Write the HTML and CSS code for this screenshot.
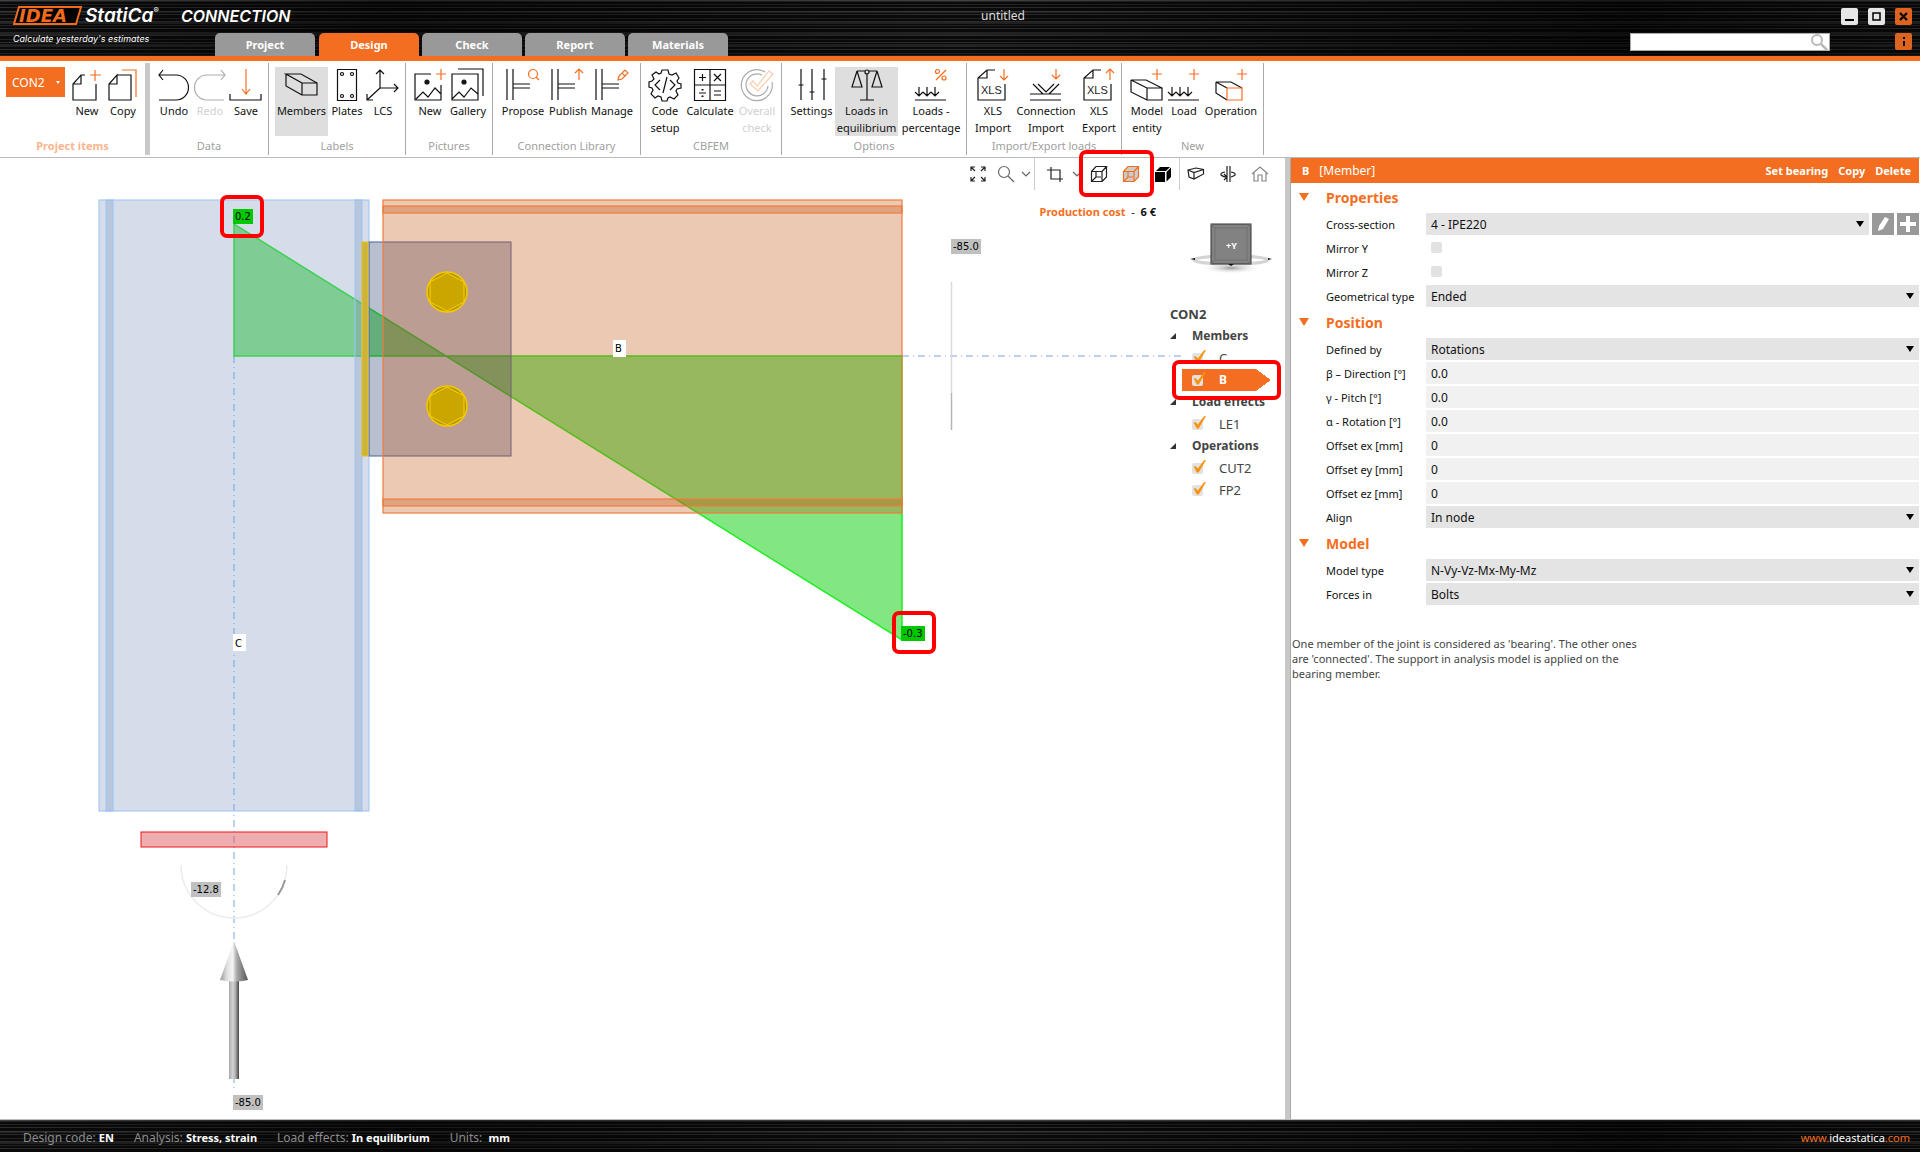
FILE: index.html
```html
<!DOCTYPE html>
<html lang="en">
<head>
<meta charset="UTF-8">
<meta name="viewport" content="width=device-width, initial-scale=1.0">
<title>IDEA StatiCa Connection - untitled</title>
<link rel="stylesheet" href="styles.css">
</head>
<body>
<div class="app">

    <header class="header">
        <div class="brand">
            <div class="logo">
                <svg class="logo-mark" width="70" height="20" viewBox="0 0 70 20">
                    <path d="M6 1H68L63 18H1Z" fill="#000" stroke="#f26b1d" stroke-width="2"/>
                    <text x="6" y="16" class="logo-text">IDEA</text>
                </svg>
                <span class="logo-name">StatiCa<sup>®</sup></span>
                <span class="logo-module">CONNECTION</span>
            </div>
            <div class="tagline">Calculate yesterday's estimates</div>
        </div>
        <div class="title">untitled</div>
        <div class="window-buttons">
            <button type="button" class="win-btn" aria-label="Minimize"><svg width="17" height="17"><path d="M4 12H13" stroke="#000" stroke-width="2"/></svg></button>
            <button type="button" class="win-btn" aria-label="Maximize"><svg width="17" height="17"><path d="M5 5H12V12H5Z" fill="none" stroke="#000" stroke-width="1.5"/></svg></button>
            <button type="button" class="win-btn orange" aria-label="Close"><svg width="17" height="17"><path d="M5 5L12 12M12 5L5 12" stroke="#000" stroke-width="2.2"/></svg></button>
        </div>
        <div class="header-bottom">
            <nav class="tabs">
                <button type="button" class="tab">Project</button>
                <button type="button" class="tab active">Design</button>
                <button type="button" class="tab">Check</button>
                <button type="button" class="tab">Report</button>
                <button type="button" class="tab">Materials</button>
            </nav>
            <div class="search">
                <input type="text" aria-label="Search">
                <svg width="18" height="18" fill="none" stroke="#b9b9b9" stroke-width="2"><circle cx="6" cy="7" r="5"/><path d="M10 11L16 17" stroke-width="2.5"/></svg>
            </div>
            <button type="button" class="win-btn orange" aria-label="Info"><svg width="17" height="17"><path d="M9 4V6M9 8V13" stroke="#000" stroke-width="2"/></svg></button>
        </div>
    </header>

    <section class="ribbon">
        <div class="group group-items">
            <div class="tools">
                <button type="button" class="item-select">CON2 <i class="caret"></i></button>
                <button type="button" class="tool">
                    <svg class="icon" viewBox="0 0 32 32"><path d="M14 6H10L2 15V31H25V15M2 15H10V6"/><path class="or" d="M24 1V12M19 6H30"/></svg>
                    <span>New</span>
                </button>
                <button type="button" class="tool">
                    <svg class="icon" viewBox="0 0 32 32"><path d="M10 6H24V31H2V15L10 6V15H2"/><path class="or" d="M15 1H29V28"/></svg>
                    <span>Copy</span>
                </button>
            </div>
            <div class="group-label">Project items</div>
        </div>
        <div class="group group-data">
            <div class="tools">
                <button type="button" class="tool">
                    <svg class="icon" viewBox="0 0 32 32"><path d="M1 6H18A12.5 12.5 0 0 1 18 31H1M5 1L1 6L5 11"/></svg>
                    <span>Undo</span>
                </button>
                <button type="button" class="tool" disabled>
                    <svg class="icon" viewBox="0 0 32 32"><path d="M31 6H13A12.5 12.5 0 0 0 13 31H30M27 1L31 6L27 11"/></svg>
                    <span>Redo</span>
                </button>
                <button type="button" class="tool">
                    <svg class="icon" viewBox="0 0 32 32"><path d="M0 25V31H31V25"/><path class="or" d="M16 0V25M12 20L16 25L20 20"/></svg>
                    <span>Save</span>
                </button>
            </div>
            <div class="group-label">Data</div>
        </div>
        <div class="group group-labels">
            <div class="tools">
                <button type="button" class="tool selected">
                    <svg class="icon" viewBox="0 0 32 32"><path d="M16 14H31V26H16ZM16 14L0 5H15L31 14M0 5V17L16 26"/></svg>
                    <span>Members</span>
                </button>
                <button type="button" class="tool">
                    <svg class="icon" viewBox="0 0 32 32"><path d="M6.5 .5H25.5V31.5H6.5Z"/><circle cx="11" cy="5" r="1.5"/><circle cx="21" cy="5" r="1.5"/><circle cx="11" cy="27" r="1.5"/><circle cx="21" cy="27" r="1.5"/></svg>
                    <span>Plates</span>
                </button>
                <button type="button" class="tool">
                    <svg class="icon" viewBox="0 0 32 32"><path d="M13 1V19H31M13 19L0 31M9 5L13 1L17 5M27 15L31 19L27 23M0 25V31H6"/></svg>
                    <span>LCS</span>
                </button>
            </div>
            <div class="group-label">Labels</div>
        </div>
        <div class="group group-pictures">
            <div class="tools">
                <button type="button" class="tool">
                    <svg class="icon" viewBox="0 0 32 32"><path d="M17 5H1V31H27V16M2 30L9 23L14 28L21 19L27 25"/><circle cx="13" cy="13" r="2" fill="#111"/><path class="or" d="M27 0V11M22 5H32"/></svg>
                    <span>New</span>
                </button>
                <button type="button" class="tool">
                    <svg class="icon" viewBox="0 0 32 32"><path d="M0 5H26V31H0ZM6 0H31V27M0 30L7 23L12 28L19 19L26 25"/><circle cx="12" cy="13" r="2" fill="#111"/></svg>
                    <span>Gallery</span>
                </button>
            </div>
            <div class="group-label">Pictures</div>
        </div>
        <div class="group group-library">
            <div class="tools">
                <button type="button" class="tool">
                    <svg class="icon" viewBox="0 0 32 32"><path d="M0 0V31M6 0V31M6 15H23M6 19H23"/><g class="or"><circle cx="26" cy="5" r="4.5"/><path d="M29 8L32 11"/></g></svg>
                    <span>Propose</span>
                </button>
                <button type="button" class="tool">
                    <svg class="icon" viewBox="0 0 32 32"><path d="M0 0V31M6 0V31M6 15H23M6 19H23"/><path class="or" d="M27 11V0M23 4L27 0L31 4"/></svg>
                    <span>Publish</span>
                </button>
                <button type="button" class="tool">
                    <svg class="icon" viewBox="0 0 32 32"><path d="M0 0V31M6 0V31M6 15H23M6 19H23"/><path class="or" d="M22 11L23 7L29 1L32 4L26 10ZM26 4L29 7"/></svg>
                    <span>Manage</span>
                </button>
            </div>
            <div class="group-label">Connection Library</div>
        </div>
        <div class="group group-cbfem">
            <div class="tools">
                <button type="button" class="tool">
                    <svg class="icon" viewBox="0 0 32 32"><path d="M13 1H19L20 5L23 6L27 4L30 9L28 12L29 14L32 15V19L28 20L27 22L29 26L25 30L21 28L19 29L18 32H13L12 28L9 27L6 29L2 25L4 21L3 19L0 18V13L3 12L5 10L3 6L7 3L10 5L12 4Z"/><path d="M11 11L6 16L11 21M21 11L26 16L21 21M18 8L14 24"/></svg>
                    <span>Code<br>setup</span>
                </button>
                <button type="button" class="tool">
                    <svg class="icon" viewBox="0 0 32 32"><path d="M.5 .5H31.5V31.5H.5ZM16 0V32M0 16H32M5 8.5H12M8.5 5V12M20 5L27 12M27 5L20 12M5 24H12M20 22H27M20 26H27"/><path d="M8.5 20V21.5M8.5 26.5V28" stroke-width="2"/></svg>
                    <span>Calculate</span>
                </button>
                <button type="button" class="tool" disabled>
                    <svg class="icon" viewBox="0 0 32 32"><path d="M24 3A15.5 15.5 0 1 0 31 13M21 6A11 11 0 1 0 27 17"/><path class="or" d="M9 15L12 12L16 17L28 2L32 5L17 22Z"/></svg>
                    <span>Overall<br>check</span>
                </button>
            </div>
            <div class="group-label">CBFEM</div>
        </div>
        <div class="group group-options">
            <div class="tools">
                <button type="button" class="tool">
                    <svg class="icon" viewBox="0 0 32 32"><path d="M5 0V31M16 0V31M28 0V31M2.5 16H7.5M13.5 23H18.5M25.5 10H30.5"/></svg>
                    <span>Settings</span>
                </button>
                <button type="button" class="tool selected">
                    <svg class="icon" viewBox="0 0 32 32"><path d="M9 31H23M16 5V31M14 2H6M18 2H26M6 2L1 18H11L6 2M26 2L21 18H31L26 2"/><circle cx="16" cy="3" r="2"/></svg>
                    <span>Loads in<br>equilibrium</span>
                </button>
                <button type="button" class="tool">
                    <svg class="icon" viewBox="0 0 32 32"><path d="M0 31H31M4 18V27M0 23L4 27L8 23M12 18V27M8 23L12 27L16 23M20 18V27M16 23L20 27L24 23"/><g class="or"><path d="M31 1L21 11"/><circle cx="22.5" cy="2.5" r="2"/><circle cx="29" cy="9" r="2"/></g></svg>
                    <span>Loads -<br>percentage</span>
                </button>
            </div>
            <div class="group-label">Options</div>
        </div>
        <div class="group group-import">
            <div class="tools">
                <button type="button" class="tool">
                    <svg class="icon" viewBox="0 0 32 32"><path d="M18 1H10L1 9V31H28V15M1 9H10V1"/><text x="4" y="25">XLS</text><path class="or" d="M27 0V11M23 7L27 11L31 7"/></svg>
                    <span>XLS<br>Import</span>
                </button>
                <button type="button" class="tool">
                    <svg class="icon" viewBox="0 0 32 32"><path d="M0 31H31M0 25H31M3 15L13 25M8 15L16 23L24 15M29 15L19 25"/><path class="or" d="M26 0V10M22 6L26 10L30 6"/></svg>
                    <span>Connection<br>Import</span>
                </button>
                <button type="button" class="tool">
                    <svg class="icon" viewBox="0 0 32 32"><path d="M18 1H10L1 9V31H28V15M1 9H10V1"/><text x="4" y="25">XLS</text><path class="or" d="M27 11V0M23 4L27 0L31 4"/></svg>
                    <span>XLS<br>Export</span>
                </button>
            </div>
            <div class="group-label">Import/Export loads</div>
        </div>
        <div class="group group-new">
            <div class="tools">
                <button type="button" class="tool">
                    <svg class="icon" viewBox="0 0 32 32"><path d="M16 19H31V31H16ZM16 19L0 11H15L31 19M0 11V23L16 31"/><path class="or" d="M26 0V11M21 5H31"/></svg>
                    <span>Model<br>entity</span>
                </button>
                <button type="button" class="tool">
                    <svg class="icon" viewBox="0 0 32 32"><path d="M0 31H31M4 18V27M0 23L4 27L8 23M12 18V27M8 23L12 27L16 23M20 18V27M16 23L20 27L24 23"/><path class="or" d="M26 0V11M21 5H31"/></svg>
                    <span>Load</span>
                </button>
                <button type="button" class="tool">
                    <svg class="icon" viewBox="0 0 32 32"><path d="M12 19L1 13H16L27 19M1 13V24L12 31"/><path class="or" d="M12 19H27V31H12ZM27 0V11M22 5H32"/></svg>
                    <span>Operation</span>
                </button>
            </div>
            <div class="group-label">New</div>
        </div>
    </section>

    <main class="workspace">
        <div class="viewport">
            <!-- 3D scene, front view -->
            <svg class="scene" viewBox="0 158 1285 961" preserveAspectRatio="xMinYMin meet">
                <defs>
                    <linearGradient id="metal"><stop offset="0" stop-color="#aaa"/><stop offset=".35" stop-color="#d0d0d0"/><stop offset=".6" stop-color="#bbb"/><stop offset="1" stop-color="#444"/></linearGradient>
                    <linearGradient id="cone"><stop offset="0" stop-color="#999"/><stop offset=".25" stop-color="#e0e0e0"/><stop offset=".45" stop-color="#f4f4f4"/><stop offset=".6" stop-color="#aaa"/><stop offset="1" stop-color="#555"/></linearGradient>
                    <g id="bolt">
                        <circle r="20" fill="#b39a00" stroke="#f5c800" stroke-width="1.5"/>
                        <path d="M0 -19L17 -10V10L0 19L-17 10V-10Z" fill="#c9a600" stroke="#ffd000"/>
                    </g>
                </defs>

                <path class="axis" d="M234 356V1092"/>
                <path class="axis" d="M902 356H1182"/>

                <!-- bending moment -->
                <path class="moment" d="M234 224V356H902V640Z"/>

                <!-- column C -->
                <rect class="column" x="99" y="200" width="270" height="611"/>
                <rect class="column" x="106" y="200" width="7" height="611"/>
                <rect class="column" x="355" y="200" width="7" height="611"/>

                <!-- fin plate and weld -->
                <rect class="plate" x="369" y="242" width="142" height="214"/>
                <rect class="weld" x="362" y="242" width="6" height="214"/>

                <!-- beam B -->
                <rect class="beam" x="383" y="200" width="519" height="313"/>
                <rect class="beam" x="383" y="206" width="519" height="7"/>
                <rect class="beam" x="383" y="499" width="519" height="7"/>

                <use href="#bolt" x="447" y="292"/>
                <use href="#bolt" x="447" y="406"/>

                <rect class="support" x="141" y="832" width="186" height="15"/>
                <path d="M181 865A53 53 0 0 0 287 865" fill="none" stroke="#ececec" stroke-width="1.5"/>
                <path d="M285 880Q283 888 278 895" fill="none" stroke="#999" stroke-width="2"/>
                <path d="M951.5 282V393" stroke="#dadada" stroke-width="1.5"/>
                <path d="M951.5 393V430" stroke="#b5b5b5" stroke-width="1.5"/>

                <rect x="229" y="980" width="10" height="99" fill="url(#metal)"/>
                <path d="M234 941L248 980Q234 983 220 980Z" fill="url(#cone)"/>

                <g class="tags">
                    <rect x="613" y="340" width="13" height="17" fill="#fff"/><text x="615" y="352">B</text>
                    <rect x="233" y="634" width="13" height="17" fill="#fff"/><text x="235" y="647">C</text>
                    <rect x="951" y="239" width="30" height="15" fill="#c0c0c0"/><text x="953" y="250">-85.0</text>
                    <rect x="191" y="882" width="30" height="15" fill="#c0c0c0"/><text x="193" y="893">-12.8</text>
                    <rect x="233" y="1095" width="30" height="15" fill="#c0c0c0"/><text x="235" y="1106">-85.0</text>
                    <rect x="233" y="209" width="20" height="15" fill="#00c800"/><text x="235" y="220">0.2</text>
                    <rect x="901" y="626" width="24" height="15" fill="#00c800"/><text x="903" y="637">-0.3</text>
                </g>
                <rect class="mark" x="222" y="197" width="40" height="39" rx="5"/>
                <rect class="mark" x="894" y="613" width="40" height="39" rx="5"/>
            </svg>

            <div class="overlay">
                <div class="view-bar">
                    <button type="button" class="view-btn" aria-label="Zoom all"><svg class="vi" viewBox="0 0 16 16"><path d="M1 5V1H5M1 1L5 5M11 1H15V5M15 1L11 5M1 11V15H5M1 15L5 11M11 15H15V11M15 15L11 11"/></svg></button>
                    <button type="button" class="view-btn zoom" aria-label="Zoom"><svg class="vi" viewBox="0 0 16 16"><circle cx="6" cy="6" r="5.5"/><path d="M10 10L16 16"/></svg></button>
                    <button type="button" class="view-btn more" aria-label="Zoom options"><svg width="8" height="6" class="vi-sm" viewBox="0 0 8 6"><path d="M0 1L4 5L8 1"/></svg></button>
                    <span class="view-sep"></span>
                    <button type="button" class="view-btn crop" aria-label="Crop"><svg class="vi" viewBox="0 0 16 16"><path d="M4 1V13H16M0 4H13V16"/></svg></button>
                    <button type="button" class="view-btn more-sm" aria-label="Crop options"><svg width="8" height="6" class="vi-sm" viewBox="0 0 8 6"><path d="M0 1L4 5L8 1"/></svg></button>
                    <div class="marked">
                        <button type="button" class="view-btn" aria-label="Wireframe"><svg class="vi" viewBox="0 0 16 16"><path d="M.5 5.5H11V15.5H.5ZM.5 5.5L5 .5H15.5L11 5.5M15.5 .5V11L11 15.5M5 6V11H10M5 11L1 15"/></svg></button>
                        <button type="button" class="view-btn transparent" aria-label="Transparent"><svg class="vi" viewBox="0 0 16 16"><path d="M.5 5.5L5 .5H15.5V11L11 15.5H.5Z" fill="#ccc"/><path d="M.5 5.5H11V15.5M15.5 .5L11 5.5M5 6V11H10M5 11L1 15"/></svg></button>
                    </div>
                    <button type="button" class="view-btn" aria-label="Solid"><svg class="vi" viewBox="0 0 16 16"><path d="M0 6H10V16H0ZM1 5L5 1H15L11 5ZM11.5 6L16 1.5V11L11.5 15.5Z" fill="#000" stroke="none"/></svg></button>
                    <span class="view-sep"></span>
                    <button type="button" class="view-btn" aria-label="Member view"><svg class="vi" viewBox="0 0 16 16"><path d="M0 4L8 2L15.5 3.5V8L6 13L1 11ZM0 4L6 6.5L15.5 3.5M6 6.5V13"/></svg></button>
                    <button type="button" class="view-btn" aria-label="Rotate view"><svg class="vi" viewBox="0 0 16 16"><path d="M7 0V16M10 0V16M5 6Q0 7 1 9Q3 11 7 11M4 8L7 11L4 14M11 6Q16 7 15 9Q14 10 11 11"/></svg></button>
                    <button type="button" class="view-btn home" aria-label="Home"><svg class="vi" viewBox="0 0 16 16"><path d="M0 8L8 1L16 8M2 7V15H6V9H10V15H14V7"/></svg></button>
                </div>
                <div class="cost"><b>Production cost</b>&nbsp; - &nbsp;<strong>6 €</strong></div>
                <svg class="view-cube" width="84" height="52" viewBox="0 0 84 52">
                    <defs><radialGradient id="shade"><stop offset="0" stop-color="#999"/><stop offset="1" stop-color="#fff" stop-opacity="0"/></radialGradient></defs>
                    <ellipse cx="41" cy="45" rx="30" ry="6" fill="url(#shade)"/>
                    <ellipse cx="41" cy="37" rx="37" ry="4" fill="none" stroke="#d4d4d4" stroke-width="3"/>
                    <path d="M0 36L5 35V37ZM82 36L78 35V37Z" fill="#111"/>
                    <rect x="21" y="1" width="40" height="40" fill="#828282" stroke="#333"/>
                    <path d="M25 5H57V37H25ZM21 1L25 5M61 1L57 5M21 41L25 37M61 41L57 37" fill="none" stroke="#707070"/>
                    <path d="M38 41H44L41 43Z" fill="#111"/>
                    <text x="36" y="26">+Y</text>
                </svg>
                <div class="tree">
                    <div class="tree-root">CON2</div>
                    <div class="tree-group">Members</div>
                    <label class="tree-item"><input type="checkbox" checked>C</label>
                    <label class="tree-item current"><input type="checkbox" checked>B</label>
                    <div class="tree-group">Load effects</div>
                    <label class="tree-item"><input type="checkbox" checked>LE1</label>
                    <div class="tree-group">Operations</div>
                    <label class="tree-item"><input type="checkbox" checked>CUT2</label>
                    <label class="tree-item"><input type="checkbox" checked>FP2</label>
                </div>
            </div>
        </div>

        <div class="splitter"></div>

        <aside class="panel">
            <div class="panel-head">
                <b>B</b>
                <span class="panel-type">[Member]</span>
                <button type="button">Set bearing</button>
                <button type="button">Copy</button>
                <button type="button">Delete</button>
            </div>

            <h2>Properties</h2>
            <div class="row">
                <label for="section">Cross-section</label>
                <select id="section"><option>4 - IPE220</option></select>
                <button type="button" class="row-btn" aria-label="Edit"><svg width="22" height="22"><path d="M6 18L7 13L13 4L17 6L11 16Z" fill="#fff"/></svg></button>
                <button type="button" class="row-btn" aria-label="Add"><svg width="22" height="22"><path d="M11 3V19M3 11H19" stroke="#fff" stroke-width="4"/></svg></button>
            </div>
            <div class="row"><label for="mirror-y">Mirror Y</label><input type="checkbox" id="mirror-y"></div>
            <div class="row"><label for="mirror-z">Mirror Z</label><input type="checkbox" id="mirror-z"></div>
            <div class="row"><label for="geom">Geometrical type</label><select id="geom"><option>Ended</option></select></div>

            <h2>Position</h2>
            <div class="row"><label for="defined">Defined by</label><select id="defined"><option>Rotations</option></select></div>
            <div class="row"><label for="beta">β – Direction [°]</label><input type="text" id="beta" value="0.0"></div>
            <div class="row"><label for="gamma">γ - Pitch [°]</label><input type="text" id="gamma" value="0.0"></div>
            <div class="row"><label for="alpha">α - Rotation [°]</label><input type="text" id="alpha" value="0.0"></div>
            <div class="row"><label for="ex">Offset ex [mm]</label><input type="text" id="ex" value="0"></div>
            <div class="row"><label for="ey">Offset ey [mm]</label><input type="text" id="ey" value="0"></div>
            <div class="row"><label for="ez">Offset ez [mm]</label><input type="text" id="ez" value="0"></div>
            <div class="row"><label for="align">Align</label><select id="align"><option>In node</option></select></div>

            <h2>Model</h2>
            <div class="row"><label for="model">Model type</label><select id="model"><option>N-Vy-Vz-Mx-My-Mz</option></select></div>
            <div class="row"><label for="forces">Forces in</label><select id="forces"><option>Bolts</option></select></div>

            <p class="note">One member of the joint is considered as 'bearing'. The other ones are 'connected'. The support in analysis model is applied on the bearing member.</p>
        </aside>
    </main>

    <footer class="footer">
        <span>Design code: <b>EN</b></span>
        <span>Analysis: <b>Stress, strain</b></span>
        <span>Load effects: <b>In equilibrium</b></span>
        <span>Units: &nbsp;<b>mm</b></span>
        <a href="#">www.<em>ideastatica</em>.com</a>
    </footer>

</div>
</body>
</html>
```

FILE: styles.css
```css
* {
    box-sizing: border-box;
}
body {
    margin: 0;
    font-family: "Noto Sans", "Open Sans", sans-serif;
    font-size: 11px;
    color: #111;
    background-color: #fff;
}
button, input, select {
    font-family: inherit;
    font-size: inherit;
    color: inherit;
    margin: 0;
    padding: 0;
    border: none;
    background: none;
}
svg {
    display: block;
}
.app {
    display: flex;
    flex-direction: column;
    min-height: 100vh;
}

/* header */
.header, .footer {
    background-color: #0a0a0a;
    background-image:
        linear-gradient(90deg, rgba(0,0,0,0) 0%, rgba(0,0,0,0.5) 20%, rgba(0,0,0,0) 50%, rgba(0,0,0,0.6) 85%, rgba(0,0,0,0.2) 100%),
        repeating-linear-gradient(rgba(255,255,255,0.14) 0 1px, transparent 1px 4px, rgba(255,255,255,0.1) 4px 5px, transparent 5px 7px),
        repeating-linear-gradient(rgba(255,255,255,0.1) 0 2px, transparent 2px 11px);
}
.header {
    display: grid;
    grid-template-columns: 215px 1fr 129px;
    grid-template-rows: 33px 23px;
    border-bottom: 5px solid #f36e21;
    color: #fff;
}
.brand {
    grid-row: 1 / 3;
    padding: 6px 0 0 13px;
    font-style: italic;
    white-space: nowrap;
}
.logo {
    display: flex;
    align-items: center;
    height: 20px;
}
.logo-mark {
    flex: none;
}
.logo-text {
    font: italic bold 18px "DejaVu Sans", sans-serif;
    fill: #f26b1d;
}
.logo-name {
    flex: none;
    width: 98px;
    padding-left: 2px;
    font-family: Inter, sans-serif;
    font-size: 19px;
    font-weight: 600;
    line-height: 20px;
}
.logo-name sup {
    font-size: 8px;
    line-height: 8px;
    vertical-align: top;
}
.logo-module {
    font-family: Inter, sans-serif;
    font-size: 16px;
    font-weight: 600;
}
.tagline {
    margin-top: 7px;
    font-family: Inter, sans-serif;
    font-size: 9px;
    line-height: 12px;
}
.title {
    padding-top: 7px;
    text-align: center;
    font-size: 12px;
    line-height: 18px;
    color: #ddd;
}
.window-buttons {
    display: flex;
    justify-content: flex-end;
    gap: 10px;
    padding: 8px 8px 0 0;
}
.win-btn {
    width: 17px;
    height: 17px;
    border-radius: 2px;
    background-color: #e6e6e6;
    cursor: pointer;
}
.win-btn.orange {
    background-color: #dc6420;
}
.header-bottom {
    grid-column: 2 / 4;
    display: flex;
    padding-right: 8px;
}
.tabs {
    display: flex;
    gap: 3px;
    margin-right: auto;
}
.tab {
    width: 100px;
    border-radius: 5px 5px 0 0;
    background-color: #999;
    color: #fff;
    font-weight: bold;
    cursor: pointer;
}
.tab.active {
    margin-left: 1px;
    background-color: #f36e21;
}
.search {
    display: flex;
    align-items: center;
    width: 200px;
    height: 18px;
    margin-right: 65px;
    border: 1px solid #aaa;
    background-color: #fff;
}
.search input {
    flex: 1;
    min-width: 0;
    color: #111;
}

/* ribbon */
.ribbon {
    display: flex;
    height: 97px;
    padding: 2px 0;
    border-bottom: 1px solid #bbb;
}
.group {
    display: flex;
    flex-direction: column;
    justify-content: space-between;
    border-right: 1px solid #aaa;
}
.tools {
    display: grid;
    padding: 4px 0 0 6px;
}
.group-label {
    line-height: 18px;
    text-align: center;
    color: #a0a0a0;
}
.group-items {
    width: 150px;
    border-right: 5px solid #c8c8c8;
}
.group-items .tools {
    grid-template-columns: 63px 36px 36px;
}
.group-items .group-label {
    color: #f9b58e;
    font-weight: bold;
}
.group-data {
    width: 119px;
}
.group-data .tools {
    grid-template-columns: 36px 36px 36px;
}
.group-labels {
    width: 137px;
}
.group-labels .tools {
    grid-template-columns: 53px 38px 34px;
}
.group-pictures {
    width: 87px;
}
.group-pictures .tools {
    grid-template-columns: 36px 40px;
}
.group-library {
    width: 148px;
}
.group-library .tools {
    grid-template-columns: 48px 42px 46px;
}
.group-cbfem {
    width: 141px;
}
.group-cbfem .tools {
    grid-template-columns: 36px 54px 40px;
}
.group-options {
    width: 185px;
}
.group-options .tools {
    grid-template-columns: 47px 63px 66px;
}
.group-import {
    width: 155px;
}
.group-import .tools {
    grid-template-columns: 40px 66px 40px;
}
.group-new {
    width: 142px;
}
.group-new .tools {
    grid-template-columns: 38px 36px 58px;
}
.item-select {
    display: flex;
    align-items: center;
    justify-content: space-between;
    width: 59px;
    height: 30px;
    padding: 0 5px 0 6px;
    background-color: #f36e21;
    color: #fff;
    font-size: 12px;
}
.caret {
    border: 2px solid transparent;
    border-top: 3px solid #fff;
    border-bottom: none;
}
.tool {
    display: flex;
    flex-direction: column;
    align-items: center;
    gap: 1px;
    height: 69px;
    padding-top: 2px;
    line-height: 17px;
    white-space: nowrap;
    cursor: pointer;
}
.tool.selected {
    background-color: #dedede;
}
.tool:disabled {
    color: #d0d0d0;
}
.tool:disabled .icon {
    opacity: 0.35;
}
.icon {
    width: 32px;
    height: 32px;
    overflow: visible;
    fill: none;
    stroke: #111;
    stroke-width: 1.2;
}
.icon .or {
    stroke: #f36e21;
}
.icon text {
    font: 11px "Liberation Sans", sans-serif;
    fill: #222;
    stroke: none;
}
.tool span {
    text-align: center;
}

/* workspace */
.workspace {
    display: flex;
    flex: 1;
}
.viewport {
    position: relative;
    flex: 1;
    min-width: 0;
}
.scene {
    width: 100%;
}
.axis {
    stroke: #b9d2f6;
    stroke-width: 2;
    stroke-dasharray: 7 4 1 4;
}
.moment {
    fill: #82e682;
    stroke: #1eee1e;
    stroke-width: 1.5;
}
.column {
    fill: rgba(124, 151, 188, 0.33);
    stroke: rgba(160, 195, 245, 0.7);
    stroke-width: 1.5;
}
.plate {
    fill: rgba(39, 61, 112, 0.33);
    stroke: #4a62a0;
}
.weld {
    fill: #cdb23c;
    stroke: #e8c41c;
}
.beam {
    fill: rgba(195, 87, 20, 0.32);
    stroke: #f07c3c;
    stroke-width: 1.2;
}
.support {
    fill: rgba(222, 80, 85, 0.47);
    stroke: #f01818;
}
.tags text {
    font: 10px "DejaVu Sans", sans-serif;
    fill: #000;
}
.mark {
    fill: none;
    stroke: #f00;
    stroke-width: 4;
}

/* tools that lie over the scene */
.overlay {
    position: absolute;
    top: 0;
    right: 0;
    display: flex;
    flex-direction: column;
    align-items: flex-end;
}
.view-bar {
    display: flex;
    height: 32px;
    padding-right: 9px;
}
.view-btn {
    display: flex;
    align-items: center;
    justify-content: center;
    width: 32px;
    height: 32px;
    cursor: pointer;
}
.view-btn.zoom {
    width: 24px;
}
.view-btn.more {
    width: 16px;
}
.view-btn.more-sm {
    width: 12px;
}
.view-btn.crop {
    margin-left: 4px;
}
.vi, .vi-sm {
    overflow: visible;
    fill: none;
    stroke: #222;
    stroke-width: 1.2;
}
.vi {
    width: 16px;
    height: 16px;
}
.vi-sm, .zoom .vi {
    stroke: #666;
}
.transparent .vi {
    stroke: #f36e21;
}
.home .vi {
    stroke: #888;
}
.view-sep {
    width: 1px;
    background-color: #ccc;
}
.marked {
    position: relative;
    display: flex;
}
.marked::after, .current::after {
    content: "";
    position: absolute;
    border: 4px solid #f00;
    border-radius: 7px;
    pointer-events: none;
}
.marked::after {
    inset: -8px -7px -7px -4px;
}
.cost {
    padding: 13px 129px 0 0;
    line-height: 18px;
}
.cost b {
    color: #f36e21;
}
.view-cube {
    margin: 2px 11px 0 0;
}
.view-cube text {
    font: bold 9px "Noto Sans", sans-serif;
    fill: #fff;
}
.tree {
    width: 115px;
    margin-top: 28px;
    font-size: 13px;
    line-height: 22px;
    color: #444;
}
.tree-root, .tree-group {
    font-weight: bold;
}
.tree-group {
    display: flex;
    align-items: center;
    gap: 16px;
    font-size: 12px;
}
.tree-group::before {
    content: "";
    border-left: 6px solid transparent;
    border-bottom: 6px solid #333;
}
.tree-item {
    position: relative;
    display: flex;
    align-items: center;
    gap: 16px;
    height: 22px;
    padding-left: 22px;
}
.tree-item input {
    appearance: none;
    width: 11px;
    height: 11px;
    border-radius: 2px;
    background-color: #e2e2e2;
}
.tree-item input::after {
    content: "";
    display: block;
    width: 14px;
    height: 13px;
    margin-top: -3px;
    background-color: #f9920c;
    clip-path: polygon(12% 55%, 24% 50%, 42% 70%, 86% 6%, 100% 4%, 48% 100%, 34% 100%);
}
.tree-item.current {
    width: 89px;
    margin-left: 12px;
    padding-left: 10px;
    color: #fff;
    font-size: 12px;
    font-weight: bold;
    background: linear-gradient(#f36e21, #f36e21) no-repeat 0 0 / 74px 100%,
        linear-gradient(to bottom left, transparent 50%, #f36e21 51%) no-repeat 74px 0 / 15px 50%,
        linear-gradient(to top left, transparent 50%, #f36e21 51%) no-repeat 74px 100% / 15px 50%;
}
.current::after {
    inset: -9px -10px;
}

.splitter {
    width: 6px;
    border-right: 1px solid #aaa;
    background-color: #c8c8c8;
}

/* properties panel */
.panel {
    width: 629px;
    padding-right: 1px;
}
.panel-head {
    display: flex;
    align-items: center;
    gap: 10px;
    height: 25px;
    padding: 0 8px 0 11px;
    background-color: #f36e21;
    color: #fff;
}
.panel-type {
    margin-right: auto;
    font-size: 12px;
}
.panel-head button {
    font-weight: bold;
    cursor: pointer;
}
.panel h2 {
    display: flex;
    align-items: center;
    gap: 17px;
    height: 30px;
    margin: 0;
    padding: 0 0 2px 8px;
    font-size: 14px;
    color: #f36e21;
}
.panel h2::before {
    content: "";
    border: 5px solid transparent;
    border-top: 8px solid #f36e21;
    border-bottom: none;
}
.row {
    display: flex;
    gap: 3px;
    height: 22px;
    margin-bottom: 2px;
    padding-left: 35px;
}
.row:has(+ h2) {
    margin-bottom: 1px;
}
.row label {
    width: 97px;
    line-height: 24px;
    white-space: nowrap;
}
.row select, .row input[type="text"] {
    flex: 1;
    min-width: 0;
    padding: 0 5px;
    border-radius: 0;
    font-size: 12px;
}
.row select {
    appearance: none;
    background: #e4e4e4 url("data:image/svg+xml,%3Csvg xmlns='http://www.w3.org/2000/svg' width='8' height='6'%3E%3Cpath d='M0 0H8L4 6Z'/%3E%3C/svg%3E") no-repeat right 5px center;
}
.row input[type="text"] {
    background-color: #f1f1f1;
}
.row input[type="checkbox"] {
    appearance: none;
    width: 11px;
    height: 11px;
    margin: 5px;
    border-radius: 2px;
    background-color: #e2e2e2;
}
.row-btn {
    width: 22px;
    background-color: #999;
    cursor: pointer;
}
.note {
    width: 360px;
    margin: 31px 0 0;
    padding-left: 1px;
    line-height: 15px;
    color: #444;
}

/* footer */
.footer {
    display: flex;
    align-items: center;
    gap: 20px;
    height: 33px;
    padding: 3px 10px 0 23px;
    border-top: 1px solid #bbb;
    font-size: 12px;
    color: #8c8c8c;
}
.footer b {
    font-size: 11px;
    color: #fff;
}
.footer a {
    margin-left: auto;
    font-size: 11px;
    color: #f36e21;
    text-decoration: none;
}
.footer em {
    font-style: normal;
    color: #fff;
}
```
